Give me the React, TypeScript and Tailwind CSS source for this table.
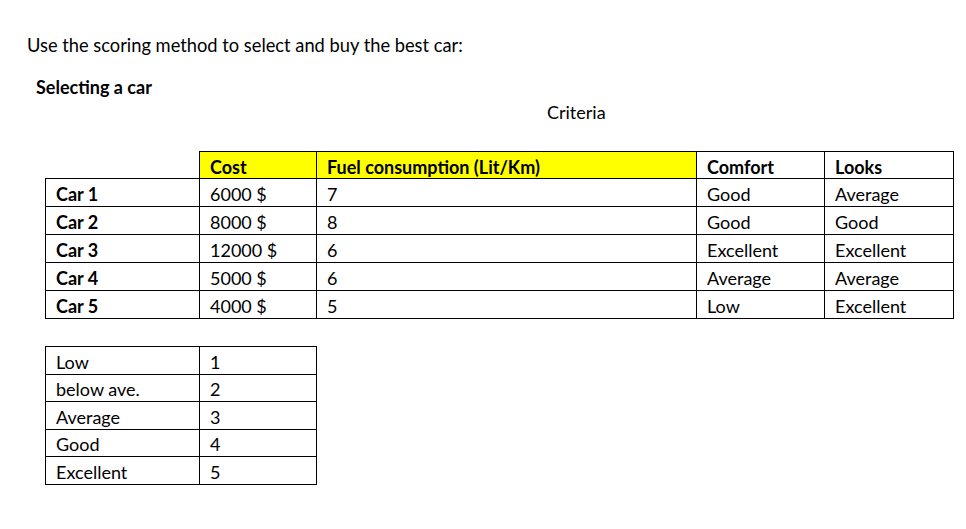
import React from 'react';

const cars = [
  { name: 'Car 1', cost: '6000 $', fuel: '7', comfort: 'Good', looks: 'Average' },
  { name: 'Car 2', cost: '8000 $', fuel: '8', comfort: 'Good', looks: 'Good' },
  { name: 'Car 3', cost: '12000 $', fuel: '6', comfort: 'Excellent', looks: 'Excellent' },
  { name: 'Car 4', cost: '5000 $', fuel: '6', comfort: 'Average', looks: 'Average' },
  { name: 'Car 5', cost: '4000 $', fuel: '5', comfort: 'Low', looks: 'Excellent' },
];

const scale = [
  { label: 'Low', score: '1' },
  { label: 'below ave.', score: '2' },
  { label: 'Average', score: '3' },
  { label: 'Good', score: '4' },
  { label: 'Excellent', score: '5' },
];

const cell = 'border border-black pl-[10px] pt-[3px] text-left align-middle leading-none';

const App = () => {
  return (
    <div className="min-h-screen bg-white text-black font-['Lato','Liberation_Sans',sans-serif] text-[18px]">
      <div className="pt-[34px] pl-[27px] leading-[22px] text-[18.3px]">Use the scoring method to select and buy the best car:</div>
      <div className="pt-[20px] pl-[36px] font-bold leading-[22px]">Selecting a car</div>
      <div className="pt-[3px] pl-[547px] leading-[22px]">Criteria</div>

      {/* Main table */}
      <table className="mt-[28px] ml-[45px] table-fixed border-collapse w-[908px]">
        <colgroup>
          <col className="w-[154px]" />
          <col className="w-[117px]" />
          <col className="w-[380px]" />
          <col className="w-[128px]" />
          <col className="w-[129px]" />
        </colgroup>
        <thead>
          <tr className="h-[27px]">
            <th className="p-0" />
            <th className={`${cell} bg-[#ffff00] font-bold`}>Cost</th>
            <th className={`${cell} bg-[#ffff00] font-bold`}>Fuel consumption (Lit/Km)</th>
            <th className={`${cell} font-bold`}>Comfort</th>
            <th className={`${cell} font-bold`}>Looks</th>
          </tr>
        </thead>
        <tbody>
          {cars.map((car, index) => (
            <tr key={index} className="h-[28px]">
              <td className={`${cell} font-bold`}>{car.name}</td>
              <td className={cell}>{car.cost}</td>
              <td className={cell}>{car.fuel}</td>
              <td className={cell}>{car.comfort}</td>
              <td className={cell}>{car.looks}</td>
            </tr>
          ))}
        </tbody>
      </table>

      {/* Score scale */}
      <table className="mt-[27px] ml-[45px] table-fixed border-collapse w-[271px]">
        <colgroup>
          <col className="w-[154px]" />
          <col className="w-[117px]" />
        </colgroup>
        <tbody>
          {scale.map((row, index) => (
            <tr key={index} className="h-[27.5px]">
              <td className={cell}>{row.label}</td>
              <td className={cell}>{row.score}</td>
            </tr>
          ))}
        </tbody>
      </table>
    </div>
  );
};

export default App;
